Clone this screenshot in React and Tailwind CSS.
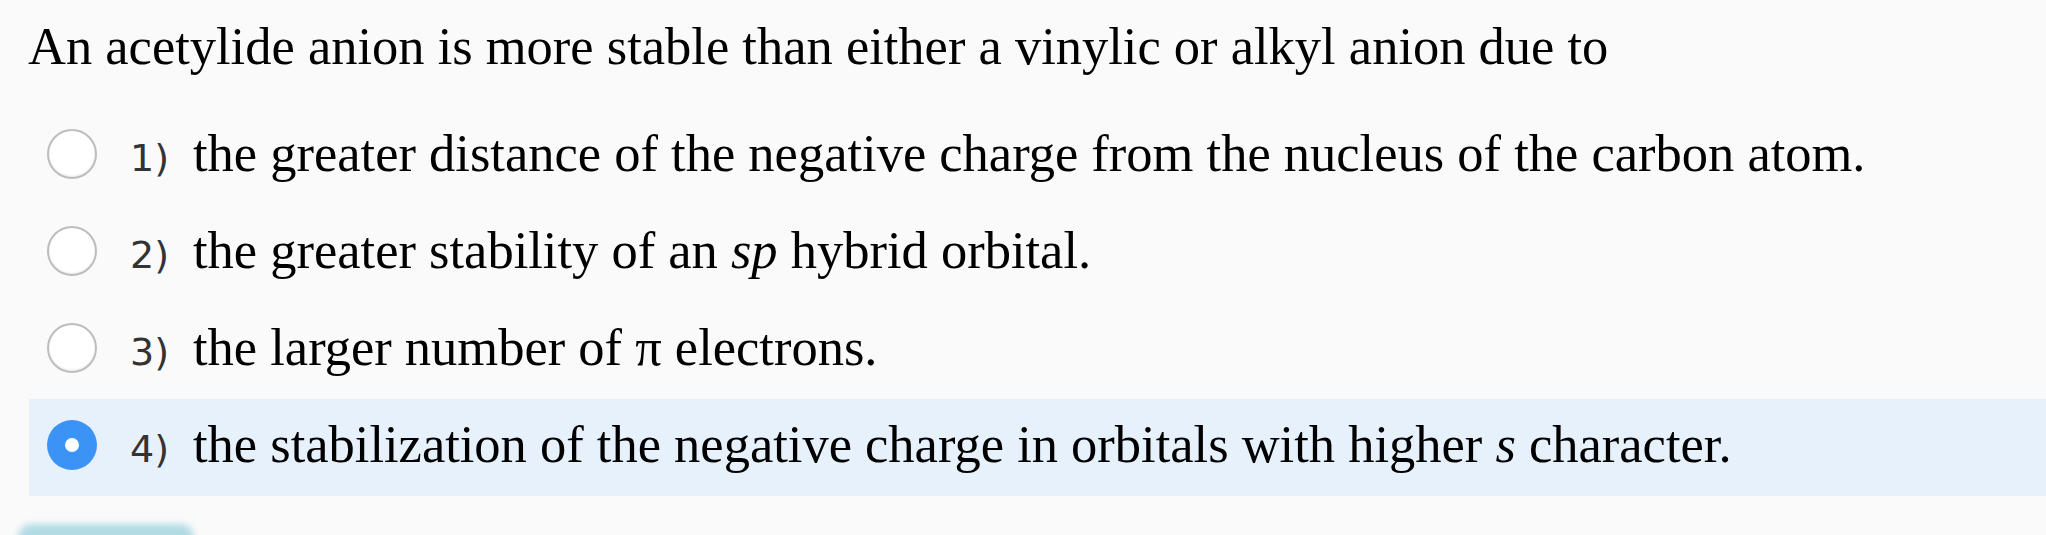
import { useState } from "react";

const options = [
  {
    id: 1,
    text: <>the greater distance of the negative charge from the nucleus of the carbon atom.</>,
  },
  {
    id: 2,
    text: (
      <>
        the greater stability of an <i>sp</i> hybrid orbital.
      </>
    ),
  },
  {
    id: 3,
    text: <>the larger number of π electrons.</>,
  },
  {
    id: 4,
    text: (
      <>
        the stabilization of the negative charge in orbitals with higher <i>s</i> character.
      </>
    ),
  },
];

const Radio = ({ checked }) => {
  if (checked) {
    return (
      <div className="mt-[21px] ml-[18px] flex size-[50px] shrink-0 items-center justify-center rounded-full bg-[#3b93f5]">
        <div className="size-[14px] rounded-full bg-white" />
      </div>
    );
  }
  return (
    <div className="mt-[21px] ml-[18px] size-[50px] shrink-0 rounded-full border-[2px] border-[#bdbdbd] bg-white shadow-[inset_0_-1px_2px_rgba(0,0,0,0.08)]" />
  );
};

const App = () => {
  const [selected, setSelected] = useState(4);

  return (
    <div className="h-[535px] w-[2046px] overflow-hidden bg-[#fafafa] font-['Liberation_Serif','Times_New_Roman',serif] text-black">
      <p className="pt-[16px] pl-[28px] text-[52.5px] leading-[60px]">
        An acetylide anion is more stable than either a vinylic or alkyl anion due to
      </p>

      <div className="mt-[32px] ml-[29px] flex flex-col">
        {options.map((option) => {
          const isSelected = selected === option.id;
          return (
            <div
              key={option.id}
              onClick={() => setSelected(option.id)}
              className={`flex h-[97px] cursor-pointer items-start ${
                isSelected ? "bg-[#e7f1fc]" : ""
              }`}
            >
              <Radio checked={isSelected} />
              <div className="ml-[33px] flex items-baseline pt-[15px]">
                <span className="w-[63px] shrink-0 font-['DejaVu_Sans','Verdana',sans-serif] text-[38px] leading-[60px] text-[#333]">
                  {option.id})
                </span>
                <span className="whitespace-nowrap text-[52.5px] leading-[60px]">
                  {option.text}
                </span>
              </div>
            </div>
          );
        })}
      </div>

      {/* submit button, only its top edge shows */}
      <div className="mt-[28px] ml-[18px] h-[40px] w-[176px] rounded-[14px] bg-[#b2dce5] blur-[3px]" />
    </div>
  );
};

export default App;
